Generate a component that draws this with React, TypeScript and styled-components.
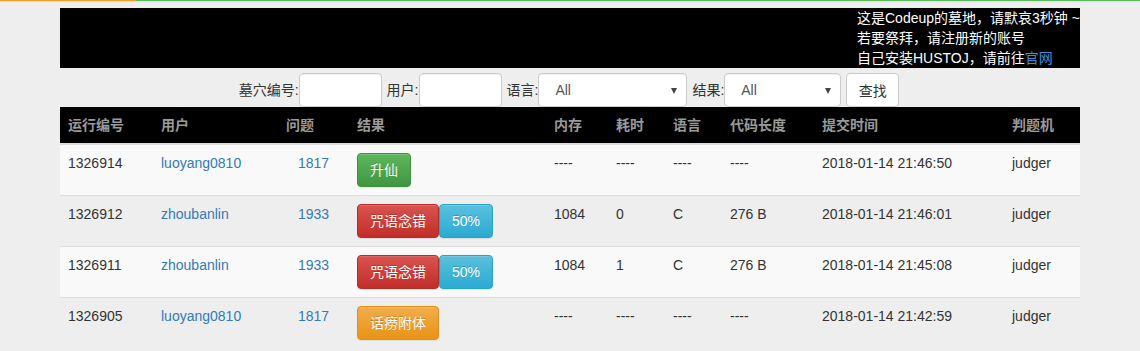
import styled, { createGlobalStyle, css } from 'styled-components'

const GlobalStyle = createGlobalStyle`
    body {
        margin: 8px 0 0;
        background: #eeeeee;
        font-family: "Liberation Sans", Arial, "Noto Sans CJK SC", sans-serif;
        font-size: 14px;
        line-height: 20px;
        color: #333;
    }
`

type Status = 'ac' | 'wa' | 'pe'

const rows: {
    id: string
    user: string
    problem: string
    status: Status
    rate?: string
    mem: string
    time: string
    lang: string
    len: string
    submit: string
}[] = [
    { id: '1326914', user: 'luoyang0810', problem: '1817', status: 'ac', mem: '----', time: '----', lang: '----', len: '----', submit: '2018-01-14 21:46:50' },
    { id: '1326912', user: 'zhoubanlin', problem: '1933', status: 'wa', rate: '50%', mem: '1084', time: '0', lang: 'C', len: '276 B', submit: '2018-01-14 21:46:01' },
    { id: '1326911', user: 'zhoubanlin', problem: '1933', status: 'wa', rate: '50%', mem: '1084', time: '1', lang: 'C', len: '276 B', submit: '2018-01-14 21:45:08' },
    { id: '1326905', user: 'luoyang0810', problem: '1817', status: 'pe', mem: '----', time: '----', lang: '----', len: '----', submit: '2018-01-14 21:42:59' },
]

const statusText: Record<Status, string> = {
    ac: '升仙',
    wa: '咒语念错',
    pe: '话痨附体',
}

const colWidths = [93, 125, 71, 197, 62, 57, 57, 92, 190, 76]
const heads = ['运行编号', '用户', '问题', '结果', '内存', '耗时', '语言', '代码长度', '提交时间', '判题机']

const App = () => {
    return (
        <>
            <GlobalStyle />
            <Progress />
            <Wrapper>
                <Banner>
                    <Notice>
                        <div>这是Codeup的墓地，请默哀3秒钟 ~</div>
                        <div>若要祭拜，请注册新的账号</div>
                        <div>
                            自己安装HUSTOJ，请前往<a href="#">官网</a>
                        </div>
                    </Notice>
                </Banner>
                <SearchForm>
                    <Label>墓穴编号:</Label>
                    <TextInput $w={83} />
                    <Label>用户:</Label>
                    <TextInput $w={83} />
                    <Label>语言:</Label>
                    <SelectBox $w={149}>
                        <select defaultValue="All">
                            <option>All</option>
                        </select>
                        <Caret />
                    </SelectBox>
                    <Label>结果:</Label>
                    <SelectBox $w={117}>
                        <select defaultValue="All">
                            <option>All</option>
                        </select>
                        <Caret />
                    </SelectBox>
                    <SearchButton type="button">查找</SearchButton>
                </SearchForm>
                <Table>
                    <colgroup>
                        {colWidths.map((w, i) => (
                            <col key={i} style={{ width: w }} />
                        ))}
                    </colgroup>
                    <thead>
                        <tr>
                            {heads.map((h) => (
                                <th key={h}>{h}</th>
                            ))}
                        </tr>
                    </thead>
                    <tbody>
                        {rows.map((r) => (
                            <tr key={r.id}>
                                <td>{r.id}</td>
                                <td>
                                    <a href="#">{r.user}</a>
                                </td>
                                <Center>
                                    <a href="#">{r.problem}</a>
                                </Center>
                                <td>
                                    <BtnGroup>
                                        <Btn $kind={r.status}>{statusText[r.status]}</Btn>
                                        {r.rate && <Btn $kind="info">{r.rate}</Btn>}
                                    </BtnGroup>
                                </td>
                                <td>{r.mem}</td>
                                <td>{r.time}</td>
                                <td>{r.lang}</td>
                                <td>{r.len}</td>
                                <td>{r.submit}</td>
                                <td>judger</td>
                            </tr>
                        ))}
                    </tbody>
                </Table>
            </Wrapper>
        </>
    )
}

const Progress = styled.div`
    position: fixed;
    top: 0;
    left: 0;
    right: 0;
    height: 1px;
    background: linear-gradient(to right, #f29d25 0, #f29d25 136px, #5cb85c 136px);
    box-shadow: 0 1px 1px rgba(0, 0, 0, 0.06);
`

const Wrapper = styled.div`
    width: 1020px;
    margin: 0 auto;
`

const Banner = styled.div`
    display: flex;
    height: 60px;
    background: #000;
`

const Notice = styled.div`
    margin-left: auto;
    width: 223px;
    color: #fff;
    white-space: nowrap;
    overflow: hidden;
    line-height: 20px;
    a {
        color: #3d8fd6;
        text-decoration: none;
    }
`

const SearchForm = styled.form`
    display: flex;
    align-items: center;
    justify-content: center;
    padding: 5px 0 0 0;
    margin-left: -2px;
`

const Label = styled.label`
    margin-left: 5px;
    white-space: nowrap;
    &:first-child {
        margin-left: 0;
    }
`

const fieldBase = css`
    box-sizing: border-box;
    height: 34px;
    border: 1px solid #ccc;
    border-radius: 4px;
    background: #fff;
    box-shadow: inset 0 1px 1px rgba(0, 0, 0, 0.075);
`

const TextInput = styled.input<{ $w: number }>`
    ${fieldBase};
    width: ${(p) => p.$w}px;
    padding: 6px 12px;
`

const SelectBox = styled.div<{ $w: number }>`
    position: relative;
    width: ${(p) => p.$w}px;
    select {
        ${fieldBase};
        appearance: none;
        width: 100%;
        padding: 6px 16px;
        font-family: inherit;
        font-size: 14px;
        color: #555;
    }
`

const Caret = styled.span`
    position: absolute;
    right: 10px;
    top: 15px;
    width: 0;
    height: 0;
    border-left: 3.5px solid transparent;
    border-right: 3.5px solid transparent;
    border-top: 6px solid #444;
    pointer-events: none;
`

const SearchButton = styled.button`
    box-sizing: border-box;
    margin-left: 5px;
    height: 34px;
    width: 53px;
    padding: 6px 0;
    border: 1px solid #ccc;
    border-radius: 4px;
    background: #fff;
    font-family: inherit;
    font-size: 14px;
    color: #333;
    white-space: nowrap;
    text-align: center;
`

const Table = styled.table`
    width: 100%;
    border-collapse: collapse;
    table-layout: fixed;
    th,
    td {
        padding: 8px;
        text-align: left;
        vertical-align: top;
        white-space: nowrap;
    }
    th {
        background: #000;
        color: #9a9a9a;
        font-weight: bold;
        border-bottom: 2px solid #ddd;
    }
    td {
        border-top: 1px solid #ddd;
    }
    tbody tr:nth-child(odd) {
        background: #f9f9f9;
    }
    a {
        color: #337ab7;
        text-decoration: none;
    }
`

const Center = styled.td`
    && {
        text-align: center;
    }
`

const BtnGroup = styled.div`
    display: flex;
`

const palette = {
    ac: ['#5cb85c', '#419641', '#3e8f3e'],
    wa: ['#d9534f', '#c12e2a', '#b92c28'],
    pe: ['#f0ad4e', '#eb9316', '#e38d13'],
    info: ['#5bc0de', '#2aabd2', '#28a4c9'],
}

const Btn = styled.span<{ $kind: Status | 'info' }>`
    display: inline-block;
    padding: 6px 12px;
    line-height: 20px;
    font-size: 14px;
    color: #fff;
    border-radius: 4px;
    border: 1px solid ${(p) => palette[p.$kind][2]};
    background: linear-gradient(to bottom, ${(p) => palette[p.$kind][0]} 0, ${(p) => palette[p.$kind][1]} 100%);
    text-shadow: 0 -1px 0 rgba(0, 0, 0, 0.2);
    box-shadow: inset 0 1px 0 rgba(255, 255, 255, 0.15), 0 1px 1px rgba(0, 0, 0, 0.075);
`

export default App
